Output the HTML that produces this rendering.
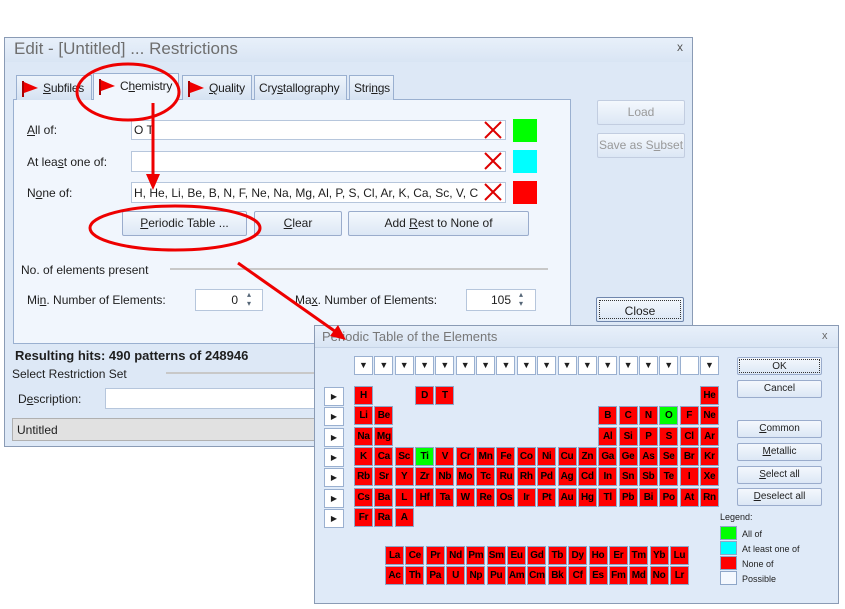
<!DOCTYPE html>
<html><head><meta charset="utf-8"><style>
*{box-sizing:border-box;margin:0;padding:0}
body{width:845px;height:609px;background:#fff;position:relative;overflow:hidden;font-family:"Liberation Sans",sans-serif;font-size:12px;color:#1e1e1e}
.a{position:absolute}
.win{left:4px;top:37px;width:689px;height:410px;background:#dde8f6;border:1px solid #8a9bb5}
.tb{background:linear-gradient(#e8f0fa,#d9e5f4)}
.btn{position:absolute;border:1px solid #9aaccc;border-radius:2px;background:linear-gradient(#f4f8fd,#dce7f5);text-align:center;font-size:12px}
.inp{position:absolute;background:#fff;border:1px solid #b6c6dc}
.tab{position:absolute;top:75px;height:25px;border:1px solid #9ab0d0;border-bottom:none;background:linear-gradient(#eef4fb,#d5e2f2);font-size:12px;line-height:25px;padding-left:4px;letter-spacing:-0.2px}
.flag{display:inline-block;vertical-align:middle;width:18px;height:16px;margin-right:4px;position:relative}
.cell{position:absolute;width:19px;height:19px;background:#f00;border:1px solid #8ea6c8;font:bold 10px "Liberation Sans",sans-serif;color:#000;text-align:center;line-height:17px;letter-spacing:-0.3px}
.g{background:#0f0}
.cb{position:absolute;width:19px;height:19px;border:1px solid #9ab0d0;background:#fff;font-size:9px;text-align:center;line-height:17px}
.pb{position:absolute;border:1px solid #9aaccc;border-radius:2px;background:linear-gradient(#f4f8fd,#dce7f5);text-align:center;font-size:10px;line-height:16px;height:18px;width:85px;left:737px}
</style></head><body>
<div class="a win"></div>
<div class="a tb" style="left:5px;top:38px;width:687px;height:24px"></div>
<div class="a" style="left:14px;top:38px;font-size:17px;color:#6e6e6e;line-height:22px">Edit - [Untitled] ... Restrictions</div>
<div class="a" style="left:677px;top:40px;font-size:12px;color:#555">x</div>

<div class="a" style="left:13px;top:99px;width:558px;height:245px;background:#f1f6fd;border:1px solid #9ab0d0"></div>
<div class="tab" style="left:16px;width:76px"><span class="flag"><svg width="18" height="16"><rect x="1" y="0" width="2" height="16" fill="#a00"/><path d="M3 1 L17 7 L3 12Z" fill="#e00"/></svg></span><u>S</u>ubfiles</div>
<div class="tab" style="left:93px;width:86px;top:73px;height:27px;background:#f1f6fd"><span class="flag"><svg width="18" height="16"><rect x="1" y="0" width="2" height="16" fill="#a00"/><path d="M3 1 L17 7 L3 12Z" fill="#e00"/></svg></span>C<u>h</u>emistry</div>
<div class="tab" style="left:182px;width:70px"><span class="flag"><svg width="18" height="16"><rect x="1" y="0" width="2" height="16" fill="#a00"/><path d="M3 1 L17 7 L3 12Z" fill="#e00"/></svg></span><u>Q</u>uality</div>
<div class="tab" style="left:254px;width:93px">Cry<u>s</u>tallography</div>
<div class="tab" style="left:349px;width:45px">Stri<u>n</u>gs</div>

<div class="a" style="left:27px;top:123px"><u>A</u>ll of:</div>
<div class="a" style="left:27px;top:155px">At lea<u>s</u>t one of:</div>
<div class="a" style="left:27px;top:186px">N<u>o</u>ne of:</div>
<div class="inp" style="left:131px;top:120px;width:375px;height:20px;padding:2px 2px;font-size:12px">O T</div>
<div class="inp" style="left:131px;top:151px;width:375px;height:21px"></div>
<div class="inp" style="left:131px;top:182px;width:375px;height:21px;padding:3px 2px;font-size:12px;white-space:nowrap;overflow:hidden">H, He, Li, Be, B, N, F, Ne, Na, Mg, Al, P, S, Cl, Ar, K, Ca, Sc, V, C</div>
<svg class="a" style="left:483px;top:120px" width="22" height="90"><g stroke="#d00" stroke-width="2"><path d="M2 2L18 18M18 2L2 18"/><path d="M2 33L18 49M18 33L2 49"/><path d="M2 64L18 80M18 64L2 80"/></g></svg>
<div class="a" style="left:513px;top:119px;width:24px;height:23px;background:#0f0"></div>
<div class="a" style="left:513px;top:150px;width:24px;height:23px;background:#0ff"></div>
<div class="a" style="left:513px;top:181px;width:24px;height:23px;background:#f00"></div>
<div class="btn" style="left:122px;top:211px;width:125px;height:25px;line-height:23px"><u>P</u>eriodic Table ...</div>
<div class="btn" style="left:254px;top:211px;width:88px;height:25px;line-height:23px"><u>C</u>lear</div>
<div class="btn" style="left:348px;top:211px;width:181px;height:25px;line-height:23px">Add <u>R</u>est to None of</div>
<div class="a" style="left:21px;top:263px">No. of elements present</div>
<div class="a" style="left:170px;top:268px;width:378px;height:2px;background:#c8c8c8"></div>
<div class="a" style="left:27px;top:293px">Mi<u>n</u>. Number of Elements:</div>
<div class="inp" style="left:195px;top:289px;width:68px;height:22px;text-align:right;padding:3px 24px 0 0">0</div>
<div class="a" style="left:247px;top:290px;font-size:8px;color:#567;line-height:9px">▴<br>▾</div>
<div class="a" style="left:295px;top:293px">Ma<u>x</u>. Number of Elements:</div>
<div class="inp" style="left:466px;top:289px;width:70px;height:22px;text-align:right;padding:3px 24px 0 0">105</div>
<div class="a" style="left:519px;top:290px;font-size:8px;color:#567;line-height:9px">▴<br>▾</div>

<div class="btn" style="left:597px;top:100px;width:88px;height:25px;line-height:23px;color:#999;border-color:#c2cde0">Load</div>
<div class="btn" style="left:597px;top:133px;width:88px;height:25px;line-height:23px;color:#999;border-color:#c2cde0">Save as S<u>u</u>bset</div>
<div class="btn" style="left:596px;top:297px;width:88px;height:25px;line-height:21px;border-color:#6f86ad"><div style="border:1px dotted #333;margin:2px;height:19px">Close</div></div>

<div class="a" style="left:15px;top:348px;font-weight:bold;font-size:13px">Resulting hits: 490 patterns of 248946</div>
<div class="a" style="left:12px;top:367px">Select Restriction Set</div>
<div class="a" style="left:166px;top:372px;width:160px;height:2px;background:#c8c8c8"></div>
<div class="a" style="left:18px;top:392px">D<u>e</u>scription:</div>
<div class="inp" style="left:105px;top:388px;width:220px;height:21px"></div>
<div class="a" style="left:12px;top:418px;width:310px;height:23px;background:#e1e1e1;border:1px solid #b0b0b0;padding:4px 4px">Untitled</div>

<div class="a" style="left:314px;top:325px;width:525px;height:279px;background:#dfeaf8;border:1px solid #8a9bb5"></div>
<div class="a tb" style="left:315px;top:326px;width:523px;height:22px;border-bottom:1px solid #c5d3e6"></div>
<div class="a" style="left:322px;top:329px;font-size:13px;color:#777">Periodic Table of the Elements</div>
<div class="a" style="left:822px;top:330px;font-size:11px;color:#666">x</div>
<div id="pt"></div>
<div class="pb" style="top:357px;padding:1px"><div style="border:1px dotted #333;line-height:13px;height:14px">OK</div></div>
<div class="pb" style="top:380px">Cancel</div>
<div class="pb" style="top:420px"><u>C</u>ommon</div>
<div class="pb" style="top:443px"><u>M</u>etallic</div>
<div class="pb" style="top:466px"><u>S</u>elect all</div>
<div class="pb" style="top:488px"><u>D</u>eselect all</div>
<div class="a" style="left:720px;top:512px;font-size:9px">Legend:</div>
<div class="a" style="left:720px;top:526px;width:17px;height:14px;background:#0f0;border:1px solid #8ea6c8"></div>
<div class="a" style="left:720px;top:541px;width:17px;height:14px;background:#0ff;border:1px solid #8ea6c8"></div>
<div class="a" style="left:720px;top:556px;width:17px;height:14px;background:#f00;border:1px solid #8ea6c8"></div>
<div class="a" style="left:720px;top:571px;width:17px;height:14px;background:#f4f8fe;border:1px solid #8ea6c8"></div>
<div class="a" style="left:742px;top:527px;font-size:9px;line-height:15px">All of<br>At least one of<br>None of<br>Possible</div>

<svg class="a" style="left:0;top:0" width="845" height="609">
<g fill="none" stroke="#e00" stroke-width="3">
<ellipse cx="128" cy="92" rx="51" ry="28"/>
<ellipse cx="175" cy="228" rx="85" ry="22"/>
<path d="M153 103 L153 178"/>
<path d="M238 263 L336 332"/>
</g>
<path d="M146 174 L153 190 L160 174Z" fill="#e00"/>
<path d="M330 336 L346 340 L338 325Z" fill="#e00"/>
</svg>
<script>
var rows=[
"H,,,D,T,,,,,,,,,,,,,He",
"Li,Be,,,,,,,,,,,B,C,N,O,F,Ne",
"Na,Mg,,,,,,,,,,,Al,Si,P,S,Cl,Ar",
"K,Ca,Sc,Ti,V,Cr,Mn,Fe,Co,Ni,Cu,Zn,Ga,Ge,As,Se,Br,Kr",
"Rb,Sr,Y,Zr,Nb,Mo,Tc,Ru,Rh,Pd,Ag,Cd,In,Sn,Sb,Te,I,Xe",
"Cs,Ba,L,Hf,Ta,W,Re,Os,Ir,Pt,Au,Hg,Tl,Pb,Bi,Po,At,Rn",
"Fr,Ra,A"];
var p=20.35,h='';
for(var c=0;c<18;c++){h+='<div class="cb" style="left:'+(354+c*p)+'px;top:356px">'+(c==16?'':'▼')+'</div>';}
for(var r=0;r<7;r++){h+='<div class="cb" style="left:324px;top:'+(387+r*p)+'px;width:20px;font-size:8px">▶</div>';
var e=rows[r].split(',');for(var c=0;c<e.length;c++){if(!e[c])continue;h+='<div class="cell'+((e[c]=='O'||e[c]=='Ti')?' g':'')+'" style="left:'+(354+c*p)+'px;top:'+(386+r*p)+'px">'+e[c]+'</div>';}}
var f=["La,Ce,Pr,Nd,Pm,Sm,Eu,Gd,Tb,Dy,Ho,Er,Tm,Yb,Lu","Ac,Th,Pa,U,Np,Pu,Am,Cm,Bk,Cf,Es,Fm,Md,No,Lr"];
for(var r=0;r<2;r++){var e=f[r].split(',');for(var c=0;c<15;c++)h+='<div class="cell" style="left:'+(385+c*p)+'px;top:'+(546+r*p)+'px">'+e[c]+'</div>';}
document.getElementById('pt').innerHTML=h;
</script>
</body></html>
